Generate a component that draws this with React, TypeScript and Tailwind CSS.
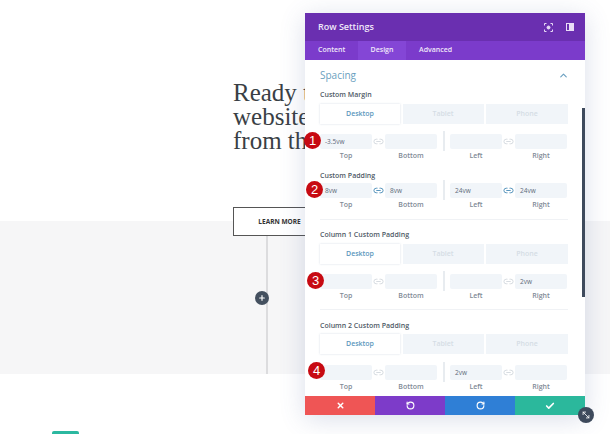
import { Check, ChevronUp, Link2, MoveDiagonal2, Plus, RotateCcw, RotateCw, X } from "lucide-react";

const sans = "font-['Open_Sans',sans-serif]";

function DeviceTabs() {
  return (
    <div className="flex h-5 justify-between text-[7px] font-semibold">
      <div className="flex w-[80px] items-center justify-center bg-white text-[#5c97bd] shadow-[0_0_2px_rgba(120,140,170,0.3)]">Desktop</div>
      <div className="flex w-[81px] items-center justify-center bg-[#f1f5f9] text-[#d5dde5]">Tablet</div>
      <div className="flex w-[82px] items-center justify-center bg-[#f1f5f9] text-[#d5dde5]">Phone</div>
    </div>
  );
}

function Field({ value }: { value?: string }) {
  return (
    <div className="flex h-[15px] w-[52px] items-center rounded-[2px] bg-[#f1f5f9] pl-[5px] text-[6.5px] text-[#5d6b7a]">
      {value}
    </div>
  );
}

function Pair({ a, b, linked, labels }: { a?: string; b?: string; linked?: boolean; labels: [string, string] }) {
  return (
    <div className="flex w-[117px] flex-col">
      <div className="flex items-center justify-between">
        <Field value={a} />
        <Link2 size={11} strokeWidth={linked ? 2 : 1.5} className={linked ? "text-[#4a8cb8]" : "text-[#c5ccd4]"} />
        <Field value={b} />
      </div>
      <div className="mt-px flex justify-between text-[7px] font-semibold leading-[12px] text-[#7f8a96]">
        <span className="w-[52px] text-center">{labels[0]}</span>
        <span className="w-[52px] text-center">{labels[1]}</span>
      </div>
    </div>
  );
}

function Inputs({ vals, linked, className }: { vals: (string | undefined)[]; linked?: boolean; className: string }) {
  return (
    <div className={`flex justify-between pr-px ${className}`}>
      <Pair a={vals[0]} b={vals[1]} linked={linked} labels={["Top", "Bottom"]} />
      <div className="-mt-[3px] h-5 w-[2px] bg-[#e8ecf0]" />
      <Pair a={vals[2]} b={vals[3]} linked={linked} labels={["Left", "Right"]} />
    </div>
  );
}

function Badge({ n, className }: { n: number; className: string }) {
  return (
    <div className={`absolute flex h-[17px] w-[17px] items-center justify-center rounded-full bg-[#c70a12] font-['Liberation_Sans',sans-serif] text-[13px] text-white ${className}`}>
      {n}
    </div>
  );
}

function Label({ children, className }: { children: string; className: string }) {
  return <div className={`text-[7px] font-semibold leading-[12px] text-[#4f5a66] ${className}`}>{children}</div>;
}

export default function App() {
  return (
    <div className={`relative h-[434px] w-[610px] overflow-hidden bg-white ${sans}`}>
      <div className="relative z-10 h-[221px] pl-[233px] pt-[81px]">
        {/* only the part of the heading that shows beside the settings window */}
        <h1 className="whitespace-nowrap font-['Liberation_Serif',serif] text-[25px] leading-[24px] text-[#3a3f45]">
          Ready t
          <br />
          website
          <br />
          from th
        </h1>
        <div className="mt-[54px] flex h-[29px] w-[93px] items-center justify-center border border-[#555] bg-white text-[6.5px] font-bold text-[#333]">
          LEARN MORE
        </div>
      </div>

      <div className="relative h-[153px] bg-[#f6f6f7] pl-[266px]">
        <div className="h-full w-[2px] bg-[#dcdcde]" />
        <div className="absolute left-[255px] top-[70px] flex h-[14px] w-[14px] items-center justify-center rounded-full bg-[#44505f] text-white">
          <Plus size={8} strokeWidth={3.5} />
        </div>
      </div>

      <div className="pl-[52px] pt-[57px]">
        <div className="h-[6px] w-[27px] rounded-t-[2px] bg-[#2bb8a0]" />
      </div>

      <div className="absolute left-[305px] top-[13px] z-20 flex h-[402px] w-[280px] flex-col bg-white shadow-[0_4px_24px_rgba(70,90,150,0.2)]">
        <div className="flex h-[28px] shrink-0 items-center justify-between bg-[#6a2fb0] pl-[13px] pr-[11px] text-white">
          <span className="text-[9px] font-semibold text-[#f0e8fa]">Row Settings</span>
          <div className="flex items-center gap-[13px]">
            <svg width="9" height="9" viewBox="0 0 9 9" fill="none" stroke="#e9ddf7" strokeWidth="1">
              <path d="M0.5 2.5V.5H2.5M6.5.5H8.5V2.5M8.5 6.5V8.5H6.5M2.5 8.5H.5V6.5" />
              <circle cx="4.5" cy="4.5" r="1.5" fill="#e9ddf7" />
            </svg>
            <svg width="8" height="8" viewBox="0 0 8 8">
              <path fillRule="evenodd" d="M0 0H8V8H0ZM1 1V7H3V1Z" fill="#e9ddf7" />
            </svg>
          </div>
        </div>
        <div className="flex h-[19px] shrink-0 items-center bg-[#7b3bcb] text-[7px] font-semibold text-[#f0e8fa]">
          <span className="w-[53px] pl-[13px]">Content</span>
          <span className="flex h-full w-[48px] items-center justify-center bg-[#8446d6]">Design</span>
          <span className="pl-[13px]">Advanced</span>
        </div>

        <div className="relative min-h-0 flex-1 pl-[15px] pr-[17px]">
          <div className="absolute right-0 top-[48px] h-[189px] w-[3px] bg-[#3e4a5c]" />
          <div className="flex items-center justify-between pt-[8px]">
            <span className="text-[10px] font-normal leading-[15px] text-[#6a9fc0]">Spacing</span>
            <ChevronUp size={11} strokeWidth={2.5} className="mr-[-1px] text-[#6a9fc0]" />
          </div>

          <Label className="mt-[6px]">Custom Margin</Label>
          <div className="mt-[3px]"><DeviceTabs /></div>
          <Inputs className="mt-[10px]" vals={["-3.5vw", undefined, undefined, undefined]} />

          <Label className="mt-[8px]">Custom Padding</Label>
          <Inputs className="mt-px" linked vals={["8vw", "8vw", "24vw", "24vw"]} />
          <div className="mt-[8px] h-px bg-[#f0f2f5]" />

          <Label className="mt-[9px]">Column 1 Custom Padding</Label>
          <div className="mt-[3px]"><DeviceTabs /></div>
          <Inputs className="mt-[10px]" vals={[undefined, undefined, undefined, "2vw"]} />
          <div className="mt-[7px] h-px bg-[#f0f2f5]" />

          <Label className="mt-[10px]">Column 2 Custom Padding</Label>
          <div className="mt-[2px]"><DeviceTabs /></div>
          <Inputs className="mt-[11px]" vals={[undefined, undefined, "2vw", undefined]} />

          <Badge n={1} className="left-[-1px] top-[72px]" />
          <Badge n={2} className="left-[1px] top-[121px]" />
          <Badge n={3} className="left-[2px] top-[212px]" />
          <Badge n={4} className="left-[3px] top-[302px]" />
        </div>

        <div className="flex h-[19px] shrink-0 text-white">
          <div className="flex flex-1 items-center justify-center bg-[#ef5555]"><X size={9} strokeWidth={4} /></div>
          <div className="flex flex-1 items-center justify-center bg-[#7d3bc9]"><RotateCcw size={9} strokeWidth={3} /></div>
          <div className="flex flex-1 items-center justify-center bg-[#2f7fd6]"><RotateCw size={9} strokeWidth={3} /></div>
          <div className="flex flex-1 items-center justify-center bg-[#2bb89c]"><Check size={10} strokeWidth={4} /></div>
        </div>
        <div className="absolute bottom-[-8px] right-[-9px] flex h-[16px] w-[16px] items-center justify-center rounded-full bg-[#3e4a5c] text-white">
          <MoveDiagonal2 size={10} strokeWidth={2} />
        </div>
      </div>
    </div>
  );
}
